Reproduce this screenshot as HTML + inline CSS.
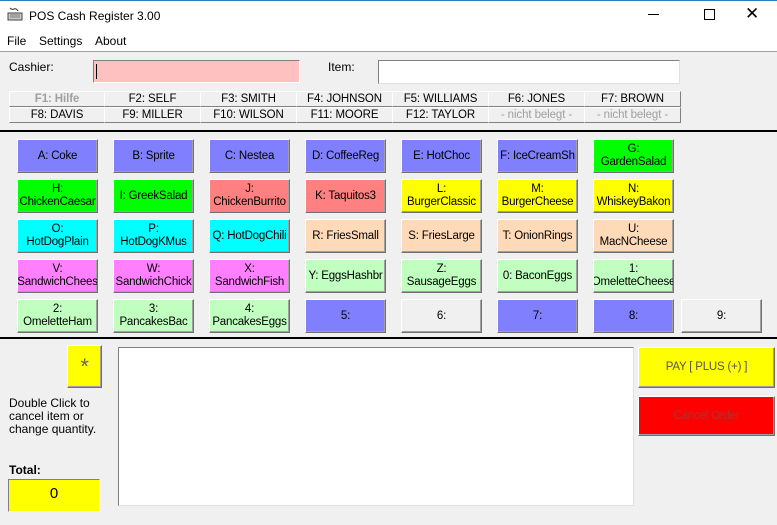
<!DOCTYPE html>
<html><head><style>
*{margin:0;padding:0;box-sizing:border-box}
body{width:777px;height:525px;background:#f0f0f0;font-family:"Liberation Sans",sans-serif;font-size:12px;color:#000;position:relative;overflow:hidden}
.a{position:absolute}
.btn{position:absolute;width:81px;height:34px;border:1px solid;border-color:#fff #707070 #707070 #fff;box-shadow:inset -1px -1px 0 #a0a0a0;display:flex;align-items:center;justify-content:center;text-align:center;line-height:13px;font-size:11.5px;letter-spacing:-0.2px;overflow:hidden;white-space:nowrap}
.fk{position:absolute;height:16px;border:1px solid;border-color:#fff #808080 #808080 #fff;text-align:center;line-height:14px;font-size:11.5px;letter-spacing:-0.1px;background:#f0f0f0}
.b{background:#8080ff}.g{background:#00ff00}.r{background:#ff8080}.y{background:#ffff00}.c{background:#00ffff}.p{background:#ffdab9}.m{background:#ff80ff}.l{background:#c0ffc0}.w{background:#f0f0f0}
</style></head><body>
<div class="a" style="left:0;top:0;width:777px;height:51px;background:#fff;border-top:1px solid #2b79c2"></div>
<svg class="a" style="left:7px;top:6px" width="16" height="16"><path d="M3 2q2 2 4 1t4 2" stroke="#333" fill="none"/><rect x="1" y="7" width="14" height="7" fill="#ccc" stroke="#444"/><path d="M3 9h10M3 11h10" stroke="#777"/></svg>
<div class="a" style="left:29px;top:9px;font-size:12px">POS Cash Register 3.00</div>
<div class="a" style="left:648px;top:14px;width:11px;height:1px;background:#000"></div>
<div class="a" style="left:704px;top:9px;width:11px;height:11px;border:1px solid #000"></div>
<div class="a" style="left:745px;top:4px;font-size:17px;line-height:20px">✕</div>
<div class="a" style="left:7px;top:34px">File</div>
<div class="a" style="left:39px;top:34px">Settings</div>
<div class="a" style="left:95px;top:34px">About</div>
<div class="a" style="left:0;top:51px;width:777px;height:1px;background:#a0a0a0"></div>
<div class="a" style="left:9px;top:60px">Cashier:</div>
<div class="a" style="left:93px;top:60px;width:207px;height:23px;background:#ffc0c0;border:1px solid;border-color:#808080 #fff #fff #808080"><div style="position:absolute;left:2px;top:3px;width:1px;height:15px;background:#000"></div></div>
<div class="a" style="left:328px;top:60px">Item:</div>
<div class="a" style="left:378px;top:60px;width:302px;height:24px;background:#fff;border:1px solid;border-color:#808080 #e0e0e0 #e0e0e0 #808080"></div>
<div class="fk" style="left:9px;top:91px;width:96px;color:#a0a0a0;font-weight:bold">F1: Hilfe</div>
<div class="fk" style="left:104px;top:91px;width:97px">F2: SELF</div>
<div class="fk" style="left:200px;top:91px;width:97px">F3: SMITH</div>
<div class="fk" style="left:296px;top:91px;width:97px">F4: JOHNSON</div>
<div class="fk" style="left:392px;top:91px;width:97px">F5: WILLIAMS</div>
<div class="fk" style="left:488px;top:91px;width:97px">F6: JONES</div>
<div class="fk" style="left:584px;top:91px;width:97px">F7: BROWN</div>
<div class="fk" style="left:9px;top:107px;width:96px">F8: DAVIS</div>
<div class="fk" style="left:104px;top:107px;width:97px">F9: MILLER</div>
<div class="fk" style="left:200px;top:107px;width:97px">F10: WILSON</div>
<div class="fk" style="left:296px;top:107px;width:97px">F11: MOORE</div>
<div class="fk" style="left:392px;top:107px;width:97px">F12: TAYLOR</div>
<div class="fk" style="left:488px;top:107px;width:97px;color:#a0a0a0">- nicht belegt -</div>
<div class="fk" style="left:584px;top:107px;width:97px;color:#a0a0a0">- nicht belegt -</div>
<div class="a" style="left:0;top:130px;width:777px;height:2px;background:#000"></div>

<div class="btn b" style="left:17px;top:139px">A: Coke</div>
<div class="btn b" style="left:113px;top:139px">B: Sprite</div>
<div class="btn b" style="left:209px;top:139px">C: Nestea</div>
<div class="btn b" style="left:305px;top:139px">D: CoffeeReg</div>
<div class="btn b" style="left:401px;top:139px">E: HotChoc</div>
<div class="btn b" style="left:497px;top:139px">F: IceCreamSh</div>
<div class="btn g" style="left:593px;top:139px">G:<br>GardenSalad</div>

<div class="btn g" style="left:17px;top:179px">H:<br>ChickenCaesar</div>
<div class="btn g" style="left:113px;top:179px">I: GreekSalad</div>
<div class="btn r" style="left:209px;top:179px">J:<br>ChickenBurrito</div>
<div class="btn r" style="left:305px;top:179px">K: Taquitos3</div>
<div class="btn y" style="left:401px;top:179px">L:<br>BurgerClassic</div>
<div class="btn y" style="left:497px;top:179px">M:<br>BurgerCheese</div>
<div class="btn y" style="left:593px;top:179px">N:<br>WhiskeyBakon</div>

<div class="btn c" style="left:17px;top:219px">O:<br>HotDogPlain</div>
<div class="btn c" style="left:113px;top:219px">P:<br>HotDogKMus</div>
<div class="btn c" style="left:209px;top:219px">Q: HotDogChili</div>
<div class="btn p" style="left:305px;top:219px">R: FriesSmall</div>
<div class="btn p" style="left:401px;top:219px">S: FriesLarge</div>
<div class="btn p" style="left:497px;top:219px">T: OnionRings</div>
<div class="btn p" style="left:593px;top:219px">U:<br>MacNCheese</div>

<div class="btn m" style="left:17px;top:259px">V:<br>SandwichChees</div>
<div class="btn m" style="left:113px;top:259px">W:<br>SandwichChick</div>
<div class="btn m" style="left:209px;top:259px">X:<br>SandwichFish</div>
<div class="btn l" style="left:305px;top:259px">Y: EggsHashbr</div>
<div class="btn l" style="left:401px;top:259px">Z:<br>SausageEggs</div>
<div class="btn l" style="left:497px;top:259px">0: BaconEggs</div>
<div class="btn l" style="left:593px;top:259px">1:<br>OmeletteCheese</div>

<div class="btn l" style="left:17px;top:299px">2:<br>OmeletteHam</div>
<div class="btn l" style="left:113px;top:299px">3:<br>PancakesBac</div>
<div class="btn l" style="left:209px;top:299px">4:<br>PancakesEggs</div>
<div class="btn b" style="left:305px;top:299px">5:</div>
<div class="btn w" style="left:401px;top:299px">6:</div>
<div class="btn b" style="left:497px;top:299px">7:</div>
<div class="btn b" style="left:593px;top:299px">8:</div>
<div class="btn w" style="left:681px;top:299px">9:</div>

<div class="a" style="left:0;top:337px;width:777px;height:2px;background:#000"></div>
<div class="btn y" style="left:67px;top:345px;width:35px;height:43px;font-size:22px;color:#666">*</div>
<div class="a" style="left:9px;top:397px;line-height:13px">Double Click to<br>cancel item or<br>change quantity.</div>
<div class="a" style="left:9px;top:463px;font-weight:bold">Total:</div>
<div class="a" style="left:8px;top:479px;width:92px;height:33px;background:#ffff00;border:1px solid;border-color:#808080 #fff #fff #808080;text-align:center;font-size:15px;line-height:28px">0</div>
<div class="a" style="left:118px;top:347px;width:516px;height:159px;background:#fff;border:1px solid;border-color:#808080 #e0e0e0 #e0e0e0 #808080"></div>
<div class="btn y" style="left:638px;top:347px;width:137px;height:41px;color:#555">PAY [ PLUS (+) ]</div>
<div class="btn" style="left:638px;top:396px;width:137px;height:40px;background:#ff0000;color:#b03030">Cancel Order</div>
</body></html>
